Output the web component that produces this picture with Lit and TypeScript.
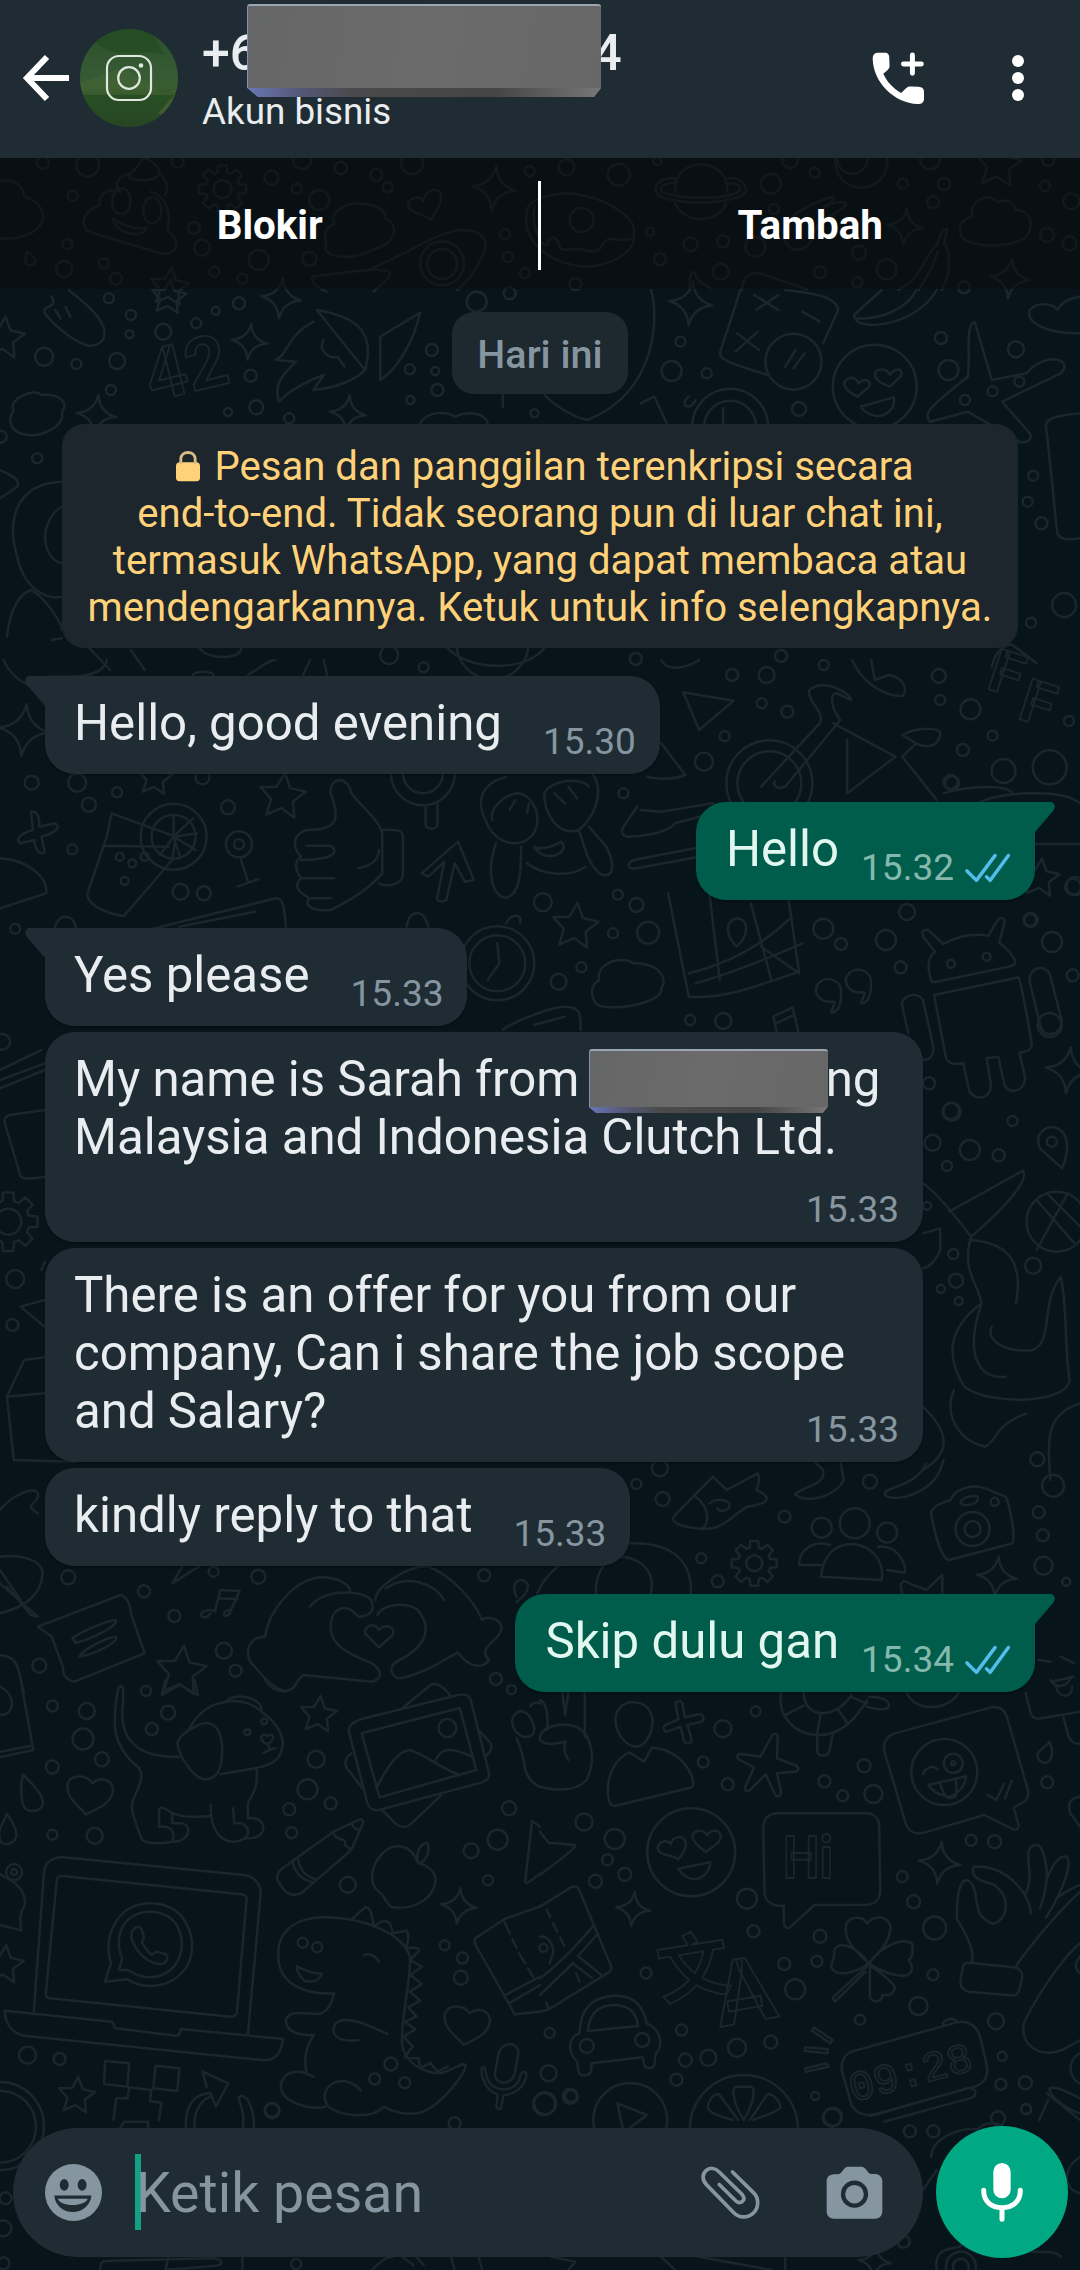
import { LitElement, html, svg, css, nothing } from "lit";
import { customElement, property } from "lit/decorators.js";
import { classMap } from "lit/directives/class-map.js";

type Triple = [number, number, number];

/* One patch of the wallpaper: an origin, a scale, and the doodles inside it. */
interface Patch {
  x: number;
  y: number;
  sx: number;
  dots: Triple[];
  stars?: Triple[];
  sparkles?: Triple[];
  gears?: Triple[];
  paths: string[];
}

const SY = 1 / 3;
const WIDE = 0.68878;

const patches: Patch[] = [
  {
    x: 0, y: 0, sx: 0.40816,
    dots: [[105,488,6],[215,495,11.5],[435,485,6],[665,533,7],[727,566,5],[835,504,6],[922,525,6],[950,562,5],[1010,490,11],[1298,513,5],[1388,502,8],[1516,524,11],[740,480,9],[178,587,5],[165,733,5],[157,808,8],[254,790,5],[284,836,6],[475,684,6],[495,743,8],[525,815,5],[594,836,5],[634,780,10],[758,776,7],[782,600,10],[1237,703,5],[1244,771,5],[1286,820,5],[1410,852,6],[545,567,9],[1083,790,22],[1083,792,15],[1425,660,12]],
    stars: [[415,862,20]],
    sparkles: [[1210,565,22]],
    gears: [[545,567,21]],
    paths: [
      "M0 545C20 535 55 545 60 590C95 600 110 640 105 660C90 710 30 720 0 715",
      "M320 520C340 500 350 470 355 474C370 480 392 500 390 520C385 550 300 545 320 520M315 522C285 530 280 560 295 575M390 520C405 535 415 560 405 585M295 575C260 560 240 590 245 615C200 630 190 690 230 700L400 762C440 762 440 710 410 695C420 640 410 590 370 575",
      "M277 655C300 680 340 690 360 682C350 720 280 700 277 655ZM298 565C325 565 330 640 296 642C265 640 270 565 298 565ZM374 592C400 592 405 668 372 670C342 668 345 592 374 592Z",
      "M905 808C1000 760 1080 690 1130 690C1190 690 1200 730 1180 770C1165 820 1140 850 1120 870M765 830C760 850 790 870 800 875M765 830C830 820 930 800 955 815C960 830 930 860 915 875",
      "M820 670C800 640 860 600 880 612C920 610 945 630 945 655C985 680 960 740 920 745C860 790 780 770 800 730C790 700 800 680 820 670Z",
      "M1055 660C1040 640 1000 640 1000 615C1003 590 1030 585 1037 605C1040 570 1070 560 1080 580C1085 610 1065 640 1055 660Z",
      "M1290 640C1290 590 1380 570 1420 585C1500 600 1560 660 1553 700C1560 760 1490 800 1430 800C1340 790 1280 720 1290 640ZM1310 620C1300 660 1320 740 1340 735C1345 700 1370 710 1372 745C1390 760 1410 735 1430 750C1445 755 1470 760 1475 735C1490 700 1520 730 1548 715",
      "M65 755C80 765 90 780 85 790C75 800 62 795 62 785Z",
    ],
  },
  {
    x: 640, y: 0, sx: 1 / 3,
    dots: [[393,551,10],[524,518,5],[450,480,8],[788,551,5],[870,478,10],[912,552,6],[879,607,6],[1215,558,5],[1294,604,8],[1225,480,6],[52,483,4],[402,627,5],[30,695,4],[152,733,7],[249,724,6],[60,778,6],[242,815,8],[346,740,10],[540,817,6],[657,758,7],[652,847,5],[740,808,10],[1221,705,7],[1289,730,7],[972,862,6],[664,485,26],[637,476,15]],
    stars: [[1075,495,24]],
    sparkles: [[795,680,18],[1110,835,20]],
    paths: [
      "M105 575C100 465 265 465 262 575M105 610C130 670 235 675 258 610M105 535C60 530 40 560 50 580C90 620 290 615 318 575C320 545 290 530 262 535M105 548C70 550 55 560 65 575C120 600 260 600 300 572C305 555 285 548 262 550",
      "M995 650C990 600 1040 575 1075 607C1110 590 1130 620 1125 630C1170 630 1185 670 1160 710C1120 745 990 745 965 710C950 680 970 655 995 650Z",
      "M430 690C440 640 540 600 580 590C590 600 560 615 545 625C580 605 620 600 618 615C600 640 540 650 520 700C510 765 430 770 430 690Z",
      "M890 735C850 770 850 830 775 870M890 735L908 690L922 688L912 730C935 760 930 830 905 870M893 755C880 800 850 850 835 870",
      "M305 870C310 830 330 815 360 820L500 868M150 870C145 830 155 805 165 820C170 850 200 855 210 865",
    ],
  },
  {
    x: 0, y: 290, sx: WIDE,
    dots: [[158,25,5],[190,75,5],[313,62,4],[347,40,6],[285,100,5],[237,125,8],[64,200,9],[111,222,5],[170,213,8],[188,133,4],[161,300,5],[364,257,6],[372,352,7],[331,366,4],[420,385,5],[692,35,10],[627,180,6],[595,238,5],[632,243,4],[635,300,6],[596,330,4],[988,155,5],[975,243,10],[1026,250,5],[1160,357,7],[1366,144,6],[1377,240,10],[1475,178,8],[740,10,6],[776,370,4],[1441,304,5],[1480,275,5],[1401,330,5],[1500,557,5],[1492,635,5],[1512,700,6],[1497,998,5],[54,505,5],[1,440,6],[923,1107,6],[1134,1098,6],[565,1095,9],[1545,945,12],[1152,215,28],[1270,290,42],[1060,410,38],[1060,410,26]],
    stars: [[245,22,18],[5,145,22]],
    sparkles: [[408,25,20],[362,155,18],[140,375,20],[505,370,18],[1003,40,22]],
    paths: [
      "M75 20C85 60 60 40 65 70C80 110 110 160 130 168C150 165 155 140 150 110C140 60 110 20 100 0M80 60L88 85M95 50L102 80",
      "M460 60L530 240C545 130 520 80 460 60M455 95C415 140 420 190 400 210L430 215C400 270 400 300 405 335C420 300 450 270 470 255L455 300C500 290 520 260 530 240M470 150C460 180 480 210 490 200L500 230",
      "M610 68L552 140V270C575 240 600 160 610 68Z",
      "M20 360C10 330 50 290 60 315C90 310 100 345 90 365C95 410 60 440 40 435C15 430 10 390 20 360Z",
      "M1075 0L1045 190C1045 210 1060 220 1115 255M1140 0C1190 10 1215 25 1217 60L1195 160M1095 15L1130 60M1130 15L1098 60M1165 65L1190 95M1070 130L1102 180M1100 125L1068 185M1140 230L1155 180M1152 235L1168 190",
      "M1245 320C1225 300 1220 275 1232 265C1240 260 1245 270 1246 280C1255 262 1265 270 1262 290ZM1292 290C1270 275 1265 250 1275 240C1285 235 1290 245 1292 255C1300 230 1312 235 1308 258ZM1250 350L1298 322C1300 360 1285 380 1272 378C1260 372 1252 365 1250 350Z",
      "M1440 270L1415 95C1400 110 1410 200 1405 260C1350 350 1340 370 1350 395L1405 365L1480 455C1490 460 1500 450 1495 430L1455 335L1540 250C1560 210 1520 180 1490 250Z",
      "M1280 0L1240 75C1240 130 1330 110 1360 0M1330 0C1320 50 1280 90 1245 85",
      "M1568 130C1510 130 1490 90 1495 60C1505 35 1530 40 1535 60C1540 40 1550 25 1568 20",
      "M90 575C20 580 10 700 25 800C35 900 70 930 90 920M90 650C60 680 55 800 90 820M0 540C20 560 30 570 25 590L0 625M10 1040C15 950 30 910 45 900C65 920 90 1000 90 1020M75 1050L90 1045",
      "M1568 370C1520 380 1515 390 1520 430L1535 730C1540 750 1550 750 1568 745",
      "M650 1075C680 1140 760 1150 790 1075M130 1075L160 1140M190 1080L210 1140M290 1075C300 1110 350 1110 350 1075M1440 1130C1445 1080 1460 1060 1470 1065L1505 1120",
      "M945 0C955 60 960 300 853 390C830 380 800 340 790 312M610 400C620 360 650 365 660 380C680 360 705 370 708 400M730 312V350M930 340L950 320L968 400M1000 320C985 340 1000 370 1010 330M1050 355V400",
    ],
  },
  {
    x: 0, y: 660, sx: WIDE,
    dots: [[46,368,7],[112,368,9],[170,397,5],[129,434,7],[294,352,7],[331,442,7],[105,568,5],[615,22,5],[1063,45,6],[1113,45,8],[1196,15,5],[1106,130,5],[1143,155,6],[1052,229,5],[1022,305,9],[905,400,5],[1363,48,7],[1365,120,5],[1409,148,10],[1441,227,5],[1398,270,6],[1380,366,7],[1457,333,12],[1524,322,17],[1552,183,5],[262,695,8],[296,700,7],[788,727,9],[897,704,5],[924,735,7],[890,820,5],[941,818,11],[811,965,8],[844,922,5],[22,806,5],[1050,1083,8],[1002,1080,5],[347,553,13],[347,553,5],[174,590,4],[192,610,4],[210,590,4],[181,662,4],[252,530,33],[252,530,22],[614,340,32],[614,340,20],[722,910,37],[722,910,28],[1117,370,43],[1117,370,32],[1496,780,6],[1558,680,8],[715,-50,36]],
    stars: [[225,355,18],[410,410,24],[835,800,24],[1510,655,20]],
    sparkles: [[35,210,26]],
    paths: [
      "M162 460L255 530L250 600L180 768C150 760 125 730 127 700L155 530ZM150 557L245 560M252 465V530L280 475M252 530L286 520M252 530L284 570M252 530L262 594M252 530L232 585",
      "M480 400C478 350 505 345 510 400C530 450 550 480 555 520V640C530 700 490 740 480 750C450 755 440 730 450 715C425 690 430 670 437 655C425 620 430 600 437 590C420 550 430 520 445 510C490 510 495 480 480 400ZM445 557H480C495 580 480 600 437 600M437 655H485M450 715H480M555 510C590 505 585 520 585 560V640C585 680 560 680 550 670M520 625C545 615 550 590 550 570",
      "M350 600L360 665M345 680L375 657M618 435V495C620 510 635 510 635 495V430",
      "M612 640L665 545L688 660L675 665L660 610L648 720C640 730 632 720 635 710L645 605L622 650Z",
      "M735 350C700 370 690 420 705 480C715 540 740 560 760 545C790 520 785 420 755 400C730 400 710 450 715 480M860 340C880 400 860 480 840 510C810 530 790 460 790 400C800 360 840 350 855 380M720 550C705 640 715 710 735 713C760 700 755 600 757 560M840 510C850 560 850 600 870 640C890 660 895 620 880 560L855 500M775 560C790 575 810 550 815 545C825 570 810 590 795 588C785 585 778 570 775 560ZM765 610C790 650 830 650 850 620M740 450L748 420M765 460L768 430M805 400L820 430M825 380L838 415",
      "M925 440C905 500 895 520 910 530C930 530 970 520 980 490L1035 460M930 450L960 455L1035 430M925 625C910 630 910 610 920 600L1020 560M925 625L1015 590",
      "M45 455C55 450 58 480 57 500L80 490C90 500 80 520 60 530L65 575C60 590 50 570 50 540L30 550C20 540 30 520 48 510Z",
      "M1105 380L1190 190C1200 160 1170 120 1175 90C1200 50 1240 110 1235 120L1215 100C1205 100 1205 140 1220 180L1140 380C1130 390 1120 375 1125 365M1210 190L1300 290L1230 400V240M1310 225C1330 200 1370 200 1365 225C1360 270 1340 260 1330 250L1310 225M1330 250L1310 290L1360 420",
      "M992 97L1065 122L1015 210ZM960 250L995 345C980 360 950 358 940 350",
      "M1237 0C1250 60 1280 110 1310 108C1320 90 1310 50 1290 45L1270 60L1265 0",
      "M970 700L1000 1010C1050 1020 1110 970 1160 935L1145 720M1000 940C1060 910 1110 850 1150 770M1010 970C1060 940 1110 900 1165 850M1105 860L1160 940M1070 860C1050 820 1055 780 1070 775C1090 780 1085 830 1070 860ZM1030 700L1045 960M1090 730L1120 960",
      "M870 960C865 910 900 885 920 910C960 910 970 960 960 985C965 1030 880 1060 865 1030C855 1000 860 970 870 960Z",
      "M215 810L400 715C410 715 412 725 415 800M260 800L370 755M0 595C40 600 70 650 67 700L0 745M80 800C85 760 105 760 110 800M590 800C595 745 615 745 622 800M722 850L725 910L708 960M735 790C740 760 760 760 755 790",
      "M730 1110C740 1090 800 1040 820 1040C845 1040 843 1070 843 1110M775 1095L820 1070M5 0C20 70 60 100 70 80M155 0C150 60 90 50 70 50M360 45C380 20 390 0 400 0M440 45L450 0M470 0L475 45M280 45C285 30 310 35 310 45M960 0C970 40 1000 20 1015 0",
      "M1370 400C1400 380 1460 370 1470 400M1420 430C1440 400 1540 380 1568 430",
    ],
  },
  {
    x: 760, y: 770, sx: 1 / 3,
    dots: [[576,39,7],[441,426,8],[812,450,7],[876,516,10],[190,476,10],[243,522,6],[378,510,10],[422,592,6],[938,616,6],[573,581,4],[680,560,4],[507,940,6],[575,1025,9],[946,348,9]],
    sparkles: [[925,900,23]],
    paths: [
      "M514 632C500 590 505 560 525 545L490 500C480 480 500 475 510 485L550 522C600 495 640 490 685 497L710 455C725 435 740 445 730 470L718 518C740 535 760 555 766 575C766 585 755 588 745 590L530 635C520 638 516 636 514 632Z",
      "M522 675L775 622C785 640 810 790 815 820C815 840 800 845 778 848L795 920C797 970 740 975 732 940L715 860L680 865L692 940C698 990 640 995 627 960L610 880C580 885 565 880 558 865Z",
      "M810 640C800 590 860 580 870 615L905 750C908 795 855 805 843 775ZM425 700C435 670 480 665 490 695L520 830C523 860 505 870 490 870M425 700L445 790",
      "M215 728C210 715 230 705 222 695C175 700 160 665 172 645C190 615 240 625 243 660C245 700 235 725 215 728ZM305 700C300 687 320 677 312 667C265 672 250 637 262 617C280 587 330 597 333 632C335 672 325 697 305 700Z",
      "M50 786L40 740L98 712L115 786M48 760L102 735M828 222H960",
    ],
  },
  {
    x: 0, y: 1020, sx: WIDE,
    dots: [[1381,273,8],[1470,303,5],[1354,368,8],[1408,390,10],[1450,406,6],[1375,438,5],[1527,365,5],[1500,737,8],[1384,702,5],[1388,782,7],[1366,806,4],[1392,843,4],[1506,1318,7],[1524,15,12],[18,915,6],[22,777,9],[3,65,8],[1534,605,30],[1346,557,4],[12,605,13]],
    gears: [[12,605,26]],
    paths: [
      "M1542 445L1510 385C1500 340 1520 318 1530 322C1550 330 1555 380 1542 445Z",
      "M1340 490C1360 520 1380 570 1410 650M1378 575L1485 452C1495 480 1460 560 1410 650C1395 750 1420 790 1425 850C1380 920 1370 1000 1400 1100C1440 1160 1550 1150 1553 1080C1545 980 1550 860 1540 770M1410 660C1470 670 1485 740 1475 850M1440 920C1430 960 1460 1000 1500 990C1530 960 1510 850 1540 770M1425 850C1400 1000 1420 1080 1460 1070M1385 1110C1370 1180 1390 1260 1430 1280C1450 1260 1440 1220 1490 1180M1340 1160C1380 1240 1380 1300 1340 1350M1340 640L1365 625V690C1360 720 1350 740 1340 745",
      "M1505 540L1560 670M1520 520L1568 620M1550 520L1505 690",
      "M65 270L15 285C5 290 5 300 10 330L30 470C35 480 50 475 65 470M0 150L60 90M0 180L65 130M0 205L65 150M65 725L60 750M30 860L65 840M30 860L65 920M70 1010L35 1020L10 1130L65 1120M10 1130L20 1320L110 1325M1525 1380C1520 1250 1520 1180 1568 1150",
    ],
  },
  {
    x: 0, y: 1460, sx: WIDE,
    dots: [[99,352,7],[209,394,6],[310,335,5],[375,350,7],[253,468,6],[325,572,8],[342,632,6],[57,617,7],[703,346,6],[720,657,6],[924,72,5],[962,117,7],[958,25,8],[1139,170,6],[1263,65,7],[1018,295,5],[1042,364,6],[1529,77,11],[1508,157,6],[1514,226,6],[1515,317,9],[1548,365,4],[1412,207,17],[1412,207,8],[1193,203,10],[1241,190,15],[1288,218,10],[1095,310,8],[1444,125,4]],
    gears: [[1095,310,20]],
    stars: [[263,635,26]],
    sparkles: [[1447,350,20]],
    paths: [
      "M305 460C300 480 290 470 292 460C300 445 310 450 312 455L320 390L348 393L332 465C320 475 325 450 333 450M318 415L345 418",
      "M55 500L175 405C185 410 190 440 190 460L210 580L108 665C95 660 90 640 92 625L75 530ZM105 535C120 510 160 480 168 480C175 495 130 540 110 548ZM115 590C125 560 160 530 168 530C175 545 135 585 115 590Z",
      "M385 530C390 450 430 350 470 352C500 355 510 385 508 400M450 440C470 380 540 390 540 430C545 460 530 470 520 470C500 420 480 450 480 500C480 570 520 590 540 610C560 640 550 660 540 665L440 645C430 660 430 690 415 693C390 680 380 640 365 610C355 580 360 530 385 530M545 420C545 380 590 320 620 318C660 350 690 430 700 480M548 465C555 430 600 420 610 460C630 520 610 570 580 600C560 620 570 655 580 655C620 640 650 590 665 578C680 620 700 630 710 600C690 560 730 540 728 500C725 470 700 470 700 480M560 385C590 340 630 370 645 420M550 562L530 520C530 490 545 490 550 510C560 490 575 500 570 525Z",
      "M1035 50L1055 90L1100 40C1105 60 1100 80 1098 90C1120 110 1120 130 1085 140C1060 170 1050 210 1020 207C990 200 970 190 980 165ZM1030 130C1040 110 1065 120 1058 145C1050 160 1040 150 1042 145M1010 110C1030 140 1030 190 1020 205",
      "M1192 350C1195 280 1215 250 1240 252C1265 260 1285 300 1280 360ZM1195 315L1160 315C1160 270 1180 240 1205 255M1275 260C1300 255 1315 300 1314 338L1288 330",
      "M1352 165C1350 140 1370 125 1380 120C1385 90 1410 70 1430 85L1460 110C1465 130 1475 220 1470 250L1378 300C1370 300 1360 250 1352 165ZM1395 130C1395 110 1420 100 1420 115C1420 135 1400 140 1395 130Z",
      "M780 400C800 300 860 250 920 250C980 250 1005 310 1003 400M865 400C865 330 880 290 905 290C940 300 950 350 945 400M750 410C740 370 755 345 765 370C770 390 760 410 750 425M250 370L265 318M250 370L290 318",
      "M0 290C20 285 60 290 62 340C60 400 40 440 0 460M0 370L55 470L45 465L10 380M0 330L30 420M1310 400C1305 370 1310 355 1320 370L1345 390L1368 345V400M0 585C20 590 25 610 28 640L35 700M0 150C20 100 50 80 55 100C60 130 30 130 55 160M1155 100C1160 130 1210 120 1225 60L1220 0M1285 105C1300 130 1350 100 1365 30L1370 0M1155 105C1160 80 1200 80 1195 30L1180 0M1285 100C1285 80 1330 80 1345 10",
      "M1508 600L1525 605M1540 590L1560 610M1525 660C1535 690 1550 680 1555 650",
    ],
  },
  {
    x: 0, y: 1680, sx: 0.34439,
    dots: [[152,78,5.5],[252,93,8],[424,33,5],[488,98,7],[441,147,6],[241,177,10.5],[296,238,7],[152,261,6.5],[718,157,3],[767,124,3],[918,238,8.5],[893,328,10],[840,388,6],[960,370,6],[847,458,5.5],[152,464,5],[275,467,8],[1299,144,9],[1010,614,8],[1368,512,7.5],[1445,479,10],[1478,385,7],[1417,601,5],[1291,796,5],[1343,834,5.5],[1338,893,7],[80,1125,8.5],[173,1137,6],[790,1292,7.5],[1135,1152,6.5],[1088,1197,5.5],[1175,1208,5.5],[879,788,5],[921,802,5],[1485,29,4.5],[41,576,8],[41,576,3],[0,1338,44],[0,1340,36]],
    stars: [[925,105,19],[222,1248,19],[12,855,20]],
    sparkles: [[1332,678,18]],
    paths: [
      "M550 145C580 90 620 70 655 66C700 55 740 75 765 100C810 130 825 180 820 200C815 240 790 255 740 265L640 283M655 66C680 35 760 50 760 92M515 190C525 160 550 150 580 133C640 110 650 190 643 240C640 290 610 300 590 298C560 290 520 230 515 190ZM520 230C400 235 340 180 358 60C360 10 350 10 342 30C330 110 315 190 400 260C425 290 400 320 385 365C375 390 400 440 410 475C420 495 480 490 500 485C550 485 560 440 530 430H500V400C480 385 465 375 462 390V440C500 435 510 460 500 485M500 400C540 415 580 410 612 408M612 375C610 450 640 485 680 485C730 480 730 440 700 430H680L677 385M745 265C750 340 725 350 720 370V415C755 410 765 430 765 445C760 475 730 475 715 475",
      "M757 170C765 160 770 165 778 168C785 160 795 165 792 175C785 195 765 200 757 170ZM778 192L782 205M765 218C780 215 785 205 800 205",
      "M250 403C220 370 190 350 197 310C205 285 250 280 268 310C290 290 325 295 328 330C325 370 285 385 250 403ZM1347 1095C1315 1060 1285 1040 1292 1002C1300 975 1345 970 1363 1000C1385 982 1420 988 1423 1022C1420 1062 1380 1077 1347 1095Z",
      "M67 283C90 310 125 340 125 370C120 400 75 400 67 375C60 350 60 310 67 283ZM20 402C40 430 50 450 47 470C40 495 5 500 0 480C-10 450 10 430 20 402Z",
      "M1050 117L1330 45C1350 40 1360 45 1367 60L1420 280C1420 295 1415 300 1400 307L1100 390C1085 392 1072 385 1067 370L1013 155C1012 135 1025 125 1050 117ZM1050 160L1335 84L1383 270L1102 352ZM1095 320C1130 250 1160 210 1190 211C1230 220 1270 260 1335 285M1262 247C1275 210 1300 195 1370 230M1168 85L1250 15C1265 8 1280 10 1308 48M1390 150L1425 190C1430 210 1420 220 1408 232M1020 220C1000 235 1000 255 1008 265L1052 325M1112 392L1150 432C1165 443 1175 443 1190 435L1280 347",
      "M968 455L1045 418C1055 418 1057 425 1052 435L1020 510L880 635C860 650 840 645 825 630L805 600C803 585 808 575 820 565L968 455C970 480 990 470 985 478C1000 475 1005 485 1002 495L1020 510M1022 430C1025 445 1035 450 1045 447M850 543C855 580 880 600 905 605M865 535C870 570 890 590 915 597",
      "M1215 550C1240 555 1265 575 1265 600C1262 650 1210 690 1140 682C1120 675 1115 640 1100 635C1070 610 1075 560 1110 520C1140 490 1190 485 1215 550C1205 520 1220 490 1240 488C1250 510 1240 540 1218 550",
      "M98 997L128 575C130 545 155 530 185 532L710 585C740 590 757 615 757 640L720 1060M165 600C167 590 172 587 182 588L700 643C712 645 718 650 716 660L688 995C686 1005 682 1010 670 1010L145 955C135 953 132 948 133 940ZM13 992L325 1025L335 1045L510 1067C520 1067 522 1062 525 1047L822 1077C815 1120 800 1140 770 1141L70 1067C35 1060 15 1030 13 992Z",
      "M305 905L322 850C305 790 320 730 365 692C420 655 500 665 535 720C575 785 560 860 510 895C470 925 410 925 370 898ZM345 870L355 835C335 790 345 740 380 712C420 685 480 690 510 730C540 780 530 840 495 870C460 900 410 898 372 870ZM395 742C380 750 378 770 385 785C400 820 430 850 465 852C485 850 492 830 480 822L455 815L440 825C425 810 415 795 412 785L418 770L410 745C405 740 400 740 395 742Z",
      "M970 940C880 945 810 910 808 830C805 750 860 710 950 712C1060 715 1170 760 1190 830C1195 900 1165 1000 1167 1090C1175 1150 1230 1180 1280 1180C1320 1170 1340 1145 1352 1155C1355 1180 1270 1290 1210 1300C1170 1305 1140 1295 1115 1280C1080 1320 980 1310 950 1275C930 1240 955 1200 1000 1203C1030 1210 1040 1220 1047 1232M970 940C960 985 940 1002 920 1002C880 1000 840 990 830 1020C830 1060 870 1065 912 1065C880 1110 885 1150 890 1180M910 1190C870 1165 820 1170 815 1220C820 1270 900 1290 945 1280M862 858C880 870 910 880 935 882C920 910 900 905 885 903C870 890 862 875 862 858ZM1057 825C1070 820 1090 825 1100 845M1125 1062C1060 1030 1000 1005 975 1030C955 1060 980 1090 1042 1080",
      "M1022 717L1060 682C1075 680 1080 700 1085 740M1088 738C1110 720 1135 710 1140 760L1180 752C1190 760 1185 790 1178 805C1210 800 1220 805 1215 815L1190 840L1225 860L1192 885L1225 912L1190 935L1220 962L1185 982L1210 1010L1175 1025L1205 1048L1172 1070L1198 1100L1175 1130M1190 1135L1215 1135L1220 1165L1250 1148L1270 1175L1300 1160",
      "M1447 1125C1452 1085 1505 1080 1505 1120L1495 1180C1485 1220 1435 1215 1437 1180ZM1398 1165C1410 1150 1410 1180 1415 1195C1430 1240 1500 1240 1510 1190C1515 1170 1530 1170 1528 1190C1520 1225 1490 1245 1462 1245L1455 1285C1447 1290 1440 1285 1442 1275L1445 1243C1415 1235 1398 1200 1398 1165Z",
      "M305 1143L375 1150L370 1220L302 1212ZM452 1157L521 1165L515 1233L445 1225ZM330 1320L337 1255H370L375 1222L440 1230L435 1263L468 1268L462 1320",
      "M540 1344C535 1270 570 1240 612 1240L627 1280L663 1210L588 1175L600 1220M565 1344C560 1290 590 1255 610 1252M705 1344C715 1290 690 1270 695 1250C710 1235 740 1280 737 1344",
      "M0 583L30 600C60 620 80 650 70 680C55 700 60 740 62 752L0 735M60 0L97 210L0 232M0 215L92 197M0 20C20 30 35 50 35 75C30 100 15 105 0 105M480 0L470 45L522 15L575 45L565 0M770 0C790 40 850 50 865 0",
      "M1568 680L1465 717L1380 775C1375 785 1378 790 1382 797L1495 1003L1568 995M1468 945L1568 890M1478 970L1568 915M1465 725L1480 760M1488 778L1500 803M1507 820L1525 850M1533 865L1548 890M1568 440L1545 422L1525 605C1525 612 1532 612 1568 580",
      "M1490 140C1480 110 1500 90 1520 95C1545 105 1560 150 1545 165C1525 180 1500 165 1490 140ZM1500 175C1520 220 1520 240 1525 270C1535 300 1550 310 1568 322M1540 80C1550 60 1568 70 1568 70",
    ],
  },
  {
    x: 540, y: 1680, sx: 0.34439,
    dots: [[626,94,5],[531,146,8.5],[474,246,5.5],[545,313,6],[826,304,6],[941,257,6.5],[879,347,5.5],[968,342,9],[128,426,8.5],[217,477,10],[196,539,5.5],[246,583,6.5],[161,604,6.5],[439,517,44],[601,656,10],[620,754,6],[813,769,6.5],[709,852,6],[804,844,5.5],[741,928,10],[308,879,5.5],[411,1050,5.5],[28,1059,5],[422,1140,6.5],[489,1133,8],[572,1103,9],[670,1086,6.5],[396,1199,6],[25,1180,8],[88,1249,7.5],[15,1270,11],[799,1248,4],[850,1310,9],[1252,481,5.5],[1320,485,6.5],[1473,307,6],[1052,590,5.5],[1085,665,6.5],[1146,744,11.5],[1141,884,5.5],[1099,978,9],[929,1019,5],[1324,1024,8],[1342,1129,4.5],[1338,1213,5.5],[1409,1208,6.5],[1411,1286,5],[1330,1315,7],[1174,276,33],[1200,250,9.5],[1200,250,2],[136,1098,7],[297,1080,7],[262,1320,37],[592,1347,54],[1590,1165,17],[10,803,4]],
    sparkles: [[270,687,17],[1160,548,21]],
    paths: [
      "M402 538C380 520 340 530 342 500C350 480 370 480 380 492C385 470 410 465 420 480C430 500 415 520 402 538ZM482 516C460 500 440 480 443 465C455 445 475 450 485 465C500 445 520 450 525 468C525 490 500 500 482 516ZM402 566L495 547C490 580 470 598 445 598C425 595 410 580 402 566Z",
      "M690 400H945C970 400 985 415 985 440L988 635C985 660 975 672 950 674L797 675L728 740C718 748 710 742 708 730V677H690C665 672 650 655 652 630L648 445C650 415 665 400 690 400Z",
      "M220 130C215 90 240 65 272 67C310 67 330 100 326 130C325 170 300 200 280 200C255 200 225 170 220 130ZM197 340C195 280 220 235 260 217L302 245L325 203C390 205 440 260 445 310C445 320 440 322 430 325L220 377C205 378 200 370 197 340Z",
      "M393 70C398 60 412 62 414 72L420 112L462 103C475 102 480 118 468 125L428 135L440 178C440 192 425 195 418 182L408 140L370 155C358 155 355 140 365 135L402 118Z",
      "M675 165C685 155 692 165 690 180L688 235L740 255C755 262 752 275 738 275L688 280L700 335C700 350 688 355 682 342L655 283L610 330C600 338 592 330 597 318L622 262L580 240C565 230 575 218 590 223L640 230Z",
      "M700 40C690 110 740 165 810 165C880 165 920 110 950 60M765 40C770 90 800 100 825 100C860 95 890 70 905 45M710 107L765 77M815 100L805 160M865 88L895 133M905 52L950 70M805 163V215C808 230 835 230 840 215L850 163M955 50C1000 50 1015 65 1013 80C1005 92 970 88 948 80",
      "M1030 160L1310 82C1335 78 1350 90 1357 115L1418 335C1420 355 1410 368 1375 382L1390 435C1390 450 1380 452 1370 446L1290 405L1115 458C1090 465 1070 455 1062 430L1000 215C995 190 1005 170 1030 160ZM1112 282C1120 260 1145 255 1155 270M1128 315L1237 289C1235 320 1210 345 1185 350C1160 345 1140 335 1128 315ZM1300 345L1325 360L1347 312M1350 355L1370 302M1160 308L1175 345C1190 365 1210 350 1210 340L1208 297",
      "M1480 186C1490 210 1490 240 1470 248C1450 250 1440 230 1447 218C1455 205 1470 200 1480 186ZM1065 40C1090 95 1180 95 1215 40M1410 40L1425 100C1430 115 1440 118 1455 115L1568 95M1520 112L1535 170C1545 190 1555 192 1568 190M1485 5L1550 -10M1497 15C1505 60 1545 55 1545 20M1568 350C1540 355 1530 370 1540 400L1568 440",
      "M955 850C900 800 880 770 890 730C905 705 940 710 950 730C970 705 1010 705 1018 740C1015 790 985 815 955 850ZM955 850C920 800 870 780 855 810C855 835 850 840 845 860C855 890 910 885 955 850ZM955 850C990 800 1050 770 1080 790C1085 820 1080 835 1070 840C1085 860 1085 880 1060 887C1020 890 985 870 955 850ZM958 855V950C965 970 990 970 995 945C1020 950 1030 935 1030 920C1010 890 980 875 958 855ZM950 858C920 890 870 930 850 955L857 965L945 875",
      "M1260 560C1330 555 1380 600 1405 640C1420 670 1425 680 1425 700M1260 560C1250 580 1260 600 1315 612C1370 650 1360 720 1315 732C1270 710 1275 690 1268 670C1265 630 1255 600 1235 600C1215 610 1210 660 1210 715C1235 760 1260 800 1255 845M1410 640C1435 590 1410 540 1420 510C1430 490 1450 490 1458 510C1475 560 1480 600 1452 685M1475 590C1490 550 1510 525 1530 530C1545 550 1525 620 1470 712M1500 655C1520 640 1540 625 1568 615M1568 635C1500 700 1420 800 1380 862M1245 848L1375 862C1395 862 1402 880 1400 895L1392 930C1388 945 1380 947 1365 946L1245 935C1225 930 1218 915 1222 895L1228 860C1230 850 1238 848 1245 848Z",
      "M1568 790C1510 840 1430 970 1405 1030C1395 1080 1430 1120 1480 1118C1520 1115 1540 1095 1568 1080M1568 830C1550 850 1555 870 1568 880",
      "M115 1060C115 990 150 950 215 947C280 945 300 985 310 1030C345 1045 355 1080 345 1110C330 1120 335 1140 332 1155C325 1170 305 1165 303 1155L298 1132L150 1150L148 1175C140 1190 115 1190 112 1175L108 1145C80 1120 80 1070 115 1060ZM138 1053C145 990 180 975 215 975C260 975 280 1000 285 1038Z",
      "M905 1115L1210 1027C1245 1020 1270 1040 1278 1070L1298 1160C1302 1190 1290 1210 1262 1220L970 1303C935 1310 910 1295 902 1265L877 1175C872 1145 885 1122 905 1115ZM960 1308L1230 1228C1262 1215 1275 1240 1255 1253L1000 1325M1170 1032C1170 1018 1205 1010 1210 1025",
      "M795 1042L850 1080L842 1090L790 1052ZM770 1102L835 1108V1120L768 1113ZM770 1165L832 1150L838 1160L772 1175Z",
      "M592 1320C560 1270 555 1225 570 1220H612C625 1225 625 1260 592 1320M575 1320L520 1243C500 1240 485 1270 488 1285C500 1305 530 1310 560 1320M610 1320L660 1243C680 1240 700 1270 697 1285C680 1300 640 1310 620 1320M240 1344L225 1270L310 1305L260 1344",
      "M0 680L90 622C105 615 112 622 116 635L207 860C208 870 205 875 195 880L30 985C20 992 10 992 0 994M0 895C60 850 110 790 158 735M0 945L95 850L150 893M110 828L165 765M110 828L178 885M20 690L30 712M38 730L50 755M58 772L70 798M0 770C20 765 40 790 38 820L28 850M105 880L115 905M18 968L25 985",
      "M1480 1225C1500 1215 1568 1255 1568 1255M1480 1225C1475 1245 1530 1290 1568 1300M1475 1260L1450 1320M0 455L25 488L100 495C105 500 103 505 0 585",
      "M130 40V170M65 40L73 105L82 40M0 60C20 70 25 110 20 150M0 180C-5 140 60 125 105 140C150 160 165 240 135 300C110 330 60 335 0 320M0 180C20 200 50 190 75 185C65 210 75 225 82 240",
    ],
  },
  {
    x: 0, y: 2090, sx: WIDE,
    dots: [[395,60,7],[790,42,11],[829,18,6],[1208,83,9],[1321,124,6],[1355,124,6],[1490,58,5],[8,325,6],[430,522,5],[1312,455,6],[1395,530,15],[1395,530,8],[5,415,8],[5,520,6],[660,100,6]],
    sparkles: [[1270,515,16]],
    paths: [
      "M145 540C145 515 150 512 160 512L310 505C325 508 325 525 310 528L240 540M352 540V500M540 540C550 520 560 500 570 500M585 502L600 525M605 502L615 525M660 540L655 500M700 540L695 500M800 500L835 515L825 540M960 500L980 540M1015 500L1120 540M1140 540V505",
      "M1360 540C1355 470 1380 480 1395 468C1400 450 1440 450 1450 470C1480 500 1530 470 1540 500M1352 200C1352 150 1390 110 1420 118C1430 90 1450 100 1455 108M1340 300L1360 240M1520 10L1568 90M1568 200C1540 240 1545 300 1568 310",
      "M175 113L180 95H215V113M240 540L245 500",
    ],
  },
];

const polar = (cx: number, cy: number, r: number, deg: number) => {
  const a = (deg * Math.PI) / 180;
  return `${(cx + r * Math.cos(a)).toFixed(1)} ${(cy + r * Math.sin(a)).toFixed(1)}`;
};

function starPath(cx: number, cy: number, r: number): string {
  const pts: string[] = [];
  for (let i = 0; i < 10; i++) pts.push(polar(cx, cy, i % 2 ? r * 0.48 : r, -84 + i * 36));
  return `M${pts.join("L")}Z`;
}

function sparklePath(cx: number, cy: number, r: number): string {
  let d = `M${polar(cx, cy, r, -84)}`;
  for (let i = 0; i < 4; i++) d += `Q${polar(cx, cy, r * 0.2, -39 + i * 90)} ${polar(cx, cy, r, 6 + i * 90)}`;
  return d + "Z";
}

function gearPath(cx: number, cy: number, r: number): string {
  const pts: string[] = [];
  for (let i = 0; i < 8; i++) {
    const a = i * 45;
    pts.push(polar(cx, cy, r * 0.82, a - 16), polar(cx, cy, r * 1.14, a - 10), polar(cx, cy, r * 1.14, a + 10), polar(cx, cy, r * 0.82, a + 16));
  }
  return `M${pts.join("L")}Z`;
}

@customElement("chat-wallpaper")
class ChatWallpaper extends LitElement {
  static styles = css`
    :host { position: absolute; inset: 0; display: block; background: #07141a; }
    .art { display: block; width: 1080px; height: 2270px; fill: none; stroke: #19262c; stroke-width: 2.5; stroke-linejoin: round; stroke-linecap: round; }
    .line { vector-effect: non-scaling-stroke; }
    .word { font-family: Roboto, "Noto Sans CJK SC", sans-serif; font-weight: 700; stroke-width: 2; }
    .mono { font-family: "Liberation Mono", monospace; font-size: 42px; font-weight: 400; stroke-width: 1.8; }
    .s60 { font-size: 60px; }
    .s72 { font-size: 72px; }
    .s90 { font-size: 90px; }
  `;
  render() {
    return html`<svg class="art" viewBox="0 0 1080 2270" aria-hidden="true">
      ${patches.map((p) => {
        const place = (fn: (x: number, y: number, r: number) => string, list: Triple[] = []) =>
          list.map(([x, y, r]) => svg`<path d=${fn(p.x + x * p.sx, p.y + y * SY, r)} />`);
        return svg`<g>
          ${p.dots.map(([x, y, r]) => svg`<circle cx=${p.x + x * p.sx} cy=${p.y + y * SY} r=${r} />`)}
          ${place(starPath, p.stars)}${place(sparklePath, p.sparkles)}${place(gearPath, p.gears)}
          <g transform="translate(${p.x} ${p.y}) scale(${p.sx} ${SY})">
            ${p.paths.map((d) => svg`<path class="line" d=${d} />`)}
          </g>
        </g>`;
      })}
      <text class="word s72" transform="translate(152 402) rotate(-14)">42</text>
      <text class="word s60" transform="translate(783 1878) scale(.86 1)">Hi</text>
      <text class="word s72" transform="translate(662 1999) rotate(-9)">文</text>
      <text class="word s90" transform="translate(720 2027) rotate(-10)">A</text>
      <text class="word mono" transform="translate(853 2102) rotate(-15)">09:28</text>
      <text class="word s60" transform="translate(985 688) rotate(18)">F</text>
      <text class="word s60" transform="translate(1016 718) rotate(18)">F</text>
    </svg>`;
  }
}

@customElement("cover-block")
class CoverBlock extends LitElement {
  static styles = css`
    :host { display: inline-flex; flex-direction: column; position: relative; z-index: 1; }
    .face { flex: 1; box-sizing: border-box; border-top: 2px solid #9ba6b0; border-left: 1px solid #8590b0; border-radius: 3px 3px 0 0; background: linear-gradient(100deg, #656667, #6c6b6b 50%, #676768); }
    .lip { height: var(--lip, 9px); background: linear-gradient(90deg, #6b78b8, #56597a 14%, #4a4a4c 30%, #454545 70%, #777); clip-path: polygon(0 0, 100% 0, 98% 100%, 3% 100%); }
  `;
  render() {
    return html`<div class="face"></div><div class="lip"></div>`;
  }
}

@customElement("chat-bubble")
class ChatBubble extends LitElement {
  @property({ type: Boolean }) out = false;
  @property({ type: Boolean }) tail = false;
  @property({ type: Boolean }) block = false;
  @property() time = "";

  static styles = css`
    :host { display: flex; }
    .bubble { position: relative; box-sizing: border-box; display: flex; min-height: 98px; padding: 18px 24px 11px 29px; border-radius: 30px; background: #1f2c34; color: #e9edef; box-shadow: 0 2px 2px rgba(0, 0, 0, 0.25); font-size: 49.2px; line-height: 58px; }
    .out { margin-left: auto; padding-left: 30px; background: #005d4b; color: #e2f7ef; }
    .tailed { border-top-left-radius: 0; }
    .out.tailed { border-top-left-radius: 30px; border-top-right-radius: 0; }
    .block { display: grid; width: 878px; }
    .block .meta { grid-area: 1 / 1; }
    .block .text { grid-area: 1 / 1; padding-bottom: 11px; }
    .meta { display: flex; align-items: center; align-self: flex-end; justify-self: end; margin-left: 41px; color: #8696a0; font-size: 37px; line-height: 43px; }
    .out .meta { margin-left: 22px; color: #86b9ac; }
    .ticks { width: 45px; height: 30px; margin-left: 11px; margin-right: 1px; margin-top: 1px; fill: none; stroke: #53bdeb; stroke-width: 10.5; stroke-linecap: round; stroke-linejoin: round; }
    .tail { position: absolute; top: 0; left: -20px; width: 21px; height: 32px; fill: #1f2c34; }
    .out .tail { left: auto; right: -20px; fill: #005d4b; }
  `;
  render() {
    return html`<div class=${classMap({ bubble: true, out: this.out, tailed: this.tail, block: this.block })}>
      ${this.tail
        ? html`<svg class="tail" viewBox="0 0 21 32"><path d=${this.out ? "M0 0H16C21 0 22 5 19 9L1 30V32H0Z" : "M21 0H5C0 0 -1 5 2 9L20 30V32H21Z"} /></svg>`
        : nothing}
      <div class="text"><slot></slot></div>
      <div class="meta">
        <span>${this.time}</span>
        ${this.out
          ? html`<svg class="ticks" viewBox="613 240 138 90"><path d="M619 294L648 323L705 247M679 312L690 323L746 247" /></svg>`
          : nothing}
      </div>
    </div>`;
  }
}

@customElement("app-root")
class AppRoot extends LitElement {
  static styles = css`
    :host { display: block; }
    .screen { position: relative; display: flex; flex-direction: column; width: 1080px; height: 2270px; overflow: hidden; font-family: Roboto, "Liberation Sans", sans-serif; background: #07141a; }
    .top, .actions, .feed, .composer { position: relative; }
    .top { box-sizing: border-box; display: flex; align-items: center; height: 158px; padding: 0 56px 2px 22px; background: #1f2c34; }
    .back { width: 48px; height: 48px; fill: none; stroke: #fff; stroke-width: 6; }
    .avatar { width: 98px; height: 98px; margin-left: 10px; }
    .who { flex: 1; align-self: flex-start; margin: 24px 0 0 24px; color: #e9edef; }
    .number { display: flex; height: 58px; font-size: 50px; font-weight: 500; line-height: 58px; }
    .number-cover { width: 354px; height: 93px; margin: -20px -8px 0 -11px; }
    .kind { margin-top: 8px; font-size: 36.8px; line-height: 43px; }
    .call { width: 53px; height: 53px; fill: #fff; }
    .more { width: 12px; height: 46px; margin-left: 87px; fill: #fff; }
    .actions { display: flex; align-items: center; height: 131px; background: rgba(12, 12, 12, 0.5); color: #fff; font-size: 40.3px; font-weight: 700; line-height: 47px; }
    .action { flex: 1; padding-top: 3px; text-align: center; }
    .rule { width: 3px; height: 89px; margin: 4px 0 0 -2px; background: #fff; }
    .feed { flex: 1; display: flex; flex-direction: column; padding: 23px 45px 0; }
    .day { align-self: center; box-sizing: border-box; height: 82px; padding: 18.500px 25px 0; border-radius: 22px; background: #1d282f; color: #8696a0; font-size: 39.5px; font-weight: 500; line-height: 48px; }
    .notice { align-self: center; box-sizing: border-box; width: 956px; height: 224px; margin: 30px 0 0; padding-top: 19px; border-radius: 22px; background: #1c262c; color: #ffd279; font-size: 40.1px; line-height: 47px; text-align: center; }
    .line { display: block; }
    .lock { width: 24px; height: 32px; margin: 0 15px -2px 9px; }
    .turn { margin-top: 28px; }
    .next { margin-top: 6px; }
    .pad { display: block; height: 54px; }
    .name-cover { width: 239px; height: 64px; margin: -1px -2px -6px -3px; vertical-align: top; --lip: 6px; }
    .composer { display: flex; align-items: center; gap: 13px; height: 132px; padding: 0 12px 12px 13px; }
    .field { flex: 1; display: flex; align-items: center; height: 129px; box-sizing: border-box; padding: 0 40px 0 31px; border-radius: 65px; background: #1f2c34; color: #8696a0; }
    .smile { width: 59px; height: 57px; }
    .caret { width: 6px; height: 76px; margin: 0 -5px 0 32px; background: #14a085; }
    .hint { position: relative; flex: 1; padding-top: 3px; font-size: 55.5px; line-height: 64px; }
    .clip { width: 61px; height: 55px; }
    .cam { width: 57px; height: 53px; margin-left: 65px; }
    .mic { display: flex; align-items: center; justify-content: center; width: 132px; height: 132px; border-radius: 50%; background: #00a884; }
    .mic-glyph { width: 44px; height: 60px; }
  `;

  render() {
    return html`<main class="screen">
      <chat-wallpaper></chat-wallpaper>
      <header class="top">
        <svg class="back" viewBox="0 0 48 48"><path d="M25 3L5 24L25 45M5 24H47" /></svg>
        <svg class="avatar" viewBox="0 0 98 98">
          <defs>
            <linearGradient id="leaf" x1="0" y1="0" x2="0" y2="1">
              <stop offset="0" stop-color="#2a4f29" /><stop offset=".45" stop-color="#355a34" />
              <stop offset=".6" stop-color="#3a5c30" /><stop offset=".68" stop-color="#294e25" /><stop offset="1" stop-color="#274623" />
            </linearGradient>
            <clipPath id="round"><circle cx="49" cy="49" r="49" /></clipPath>
          </defs>
          <g clip-path="url(#round)">
            <rect width="98" height="98" fill="url(#leaf)" />
            <path d="M14 12C36 34 66 18 84 26L70 0H20Z" fill="#244a22" opacity=".7" />
            <path d="M0 54L44 38L82 64L98 60V66H0Z" fill="#4a6a38" opacity=".4" />
            <path d="M78 84L98 62V78L86 90Z" fill="#57703c" opacity=".5" />
          </g>
          <g fill="none" stroke="#dfe8df" stroke-width="2.2">
            <rect x="27" y="27" width="44" height="44" rx="12" /><circle cx="49" cy="49" r="10.8" />
          </g>
          <circle cx="61" cy="36.500" r="2.300" fill="#dfe8df" />
        </svg>
        <div class="who">
          <div class="number"><span>+6</span><cover-block class="number-cover"></cover-block><span>4</span></div>
          <div class="kind">Akun bisnis</div>
        </div>
        <svg class="call" viewBox="698 158 160 160">
          <path d="M714 160H736C746 160 750 166 750 174L751 200C751 206 748 210 742 215L732 224C744 250 762 268 786 282L800 268C805 263 810 262 816 262L838 263C848 264 855 268 855 278V298C855 310 848 315 836 315C765 312 702 250 700 178C700 167 705 161 714 160Z" />
          <path d="M820 167V222M793 194H847" stroke="#fff" stroke-width="15" stroke-linecap="round" />
        </svg>
        <svg class="more" viewBox="0 0 12 46"><circle cx="6" cy="6" r="6" /><circle cx="6" cy="23" r="6" /><circle cx="6" cy="40" r="6" /></svg>
      </header>

      <nav class="actions">
        <span class="action">Blokir</span><span class="rule"></span><span class="action">Tambah</span>
      </nav>

      <section class="feed">
        <div class="day">Hari ini</div>
        <div class="notice">
          <span class="line"><svg class="lock" viewBox="0 0 25 32"><rect y="12" width="25" height="20" rx="4" fill="#ffd279" /><path d="M5 14V9C5 -.5 20 -.5 20 9V14" fill="none" stroke="#d8bd84" stroke-width="3" /></svg>Pesan dan panggilan terenkripsi secara</span>
          <span class="line">end-to-end. Tidak seorang pun di luar chat ini,</span>
          <span class="line">termasuk WhatsApp, yang dapat membaca atau</span>
          <span class="line">mendengarkannya. Ketuk untuk info selengkapnya.</span>
        </div>
        <chat-bubble class="turn" tail time="15.30">Hello, good evening</chat-bubble>
        <chat-bubble class="turn" tail out time="15.32">Hello</chat-bubble>
        <chat-bubble class="turn" tail time="15.33">Yes please</chat-bubble>
        <chat-bubble class="next" block time="15.33">My name is Sarah from <cover-block class="name-cover"></cover-block>ng<br />Malaysia and Indonesia Clutch Ltd.<span class="pad"></span></chat-bubble>
        <chat-bubble class="next" block time="15.33">There is an offer for you from our<br />company, Can i share the job scope<br />and Salary?</chat-bubble>
        <chat-bubble class="next" time="15.33">kindly reply to that</chat-bubble>
        <chat-bubble class="turn" tail out time="15.34">Skip dulu gan</chat-bubble>
      </section>

      <footer class="composer">
        <div class="field">
          <svg class="smile" viewBox="133 160 176 172">
            <circle cx="221" cy="246" r="86" fill="#8696a0" />
            <g fill="#1f2c34"><ellipse cx="193" cy="223" rx="13.500" ry="18" /><ellipse cx="247" cy="223" rx="13.500" ry="18" /><path d="M163 255H275C273 285 246 305 219 305C190 305 165 285 163 255Z" /></g>
            <path d="M174 265H264C262 275 240 284 219 284C195 284 176 276 174 265Z" fill="#8696a0" />
          </svg>
          <span class="caret"></span>
          <span class="hint">Ketik pesan</span>
          <svg class="clip" viewBox="60 162 184 166"><path d="M158 183L222 246C238 262 238 290 222 306C204 324 178 322 162 306L80 222C66 208 66 190 78 179C90 168 106 171 118 183L188 252C200 268 182 282 170 272L118 221" fill="none" stroke="#8696a0" stroke-width="11" stroke-linecap="round" stroke-linejoin="round" /></svg>
          <svg class="cam" viewBox="438 162 172 160">
            <path d="M462 187H474C487 186 490 165 504 164H546C560 165 563 186 576 186H588C602 188 608 198 608 208V298C608 312 600 321 586 321H462C448 321 440 312 440 298V208C440 196 448 188 462 187Z" fill="#8696a0" />
            <circle cx="524" cy="247" r="41" fill="#1f2c34" /><circle cx="524" cy="247" r="28" fill="#8696a0" />
          </svg>
        </div>
        <div class="mic">
          <svg class="mic-glyph" viewBox="900 155 132 180">
            <rect x="940" y="158" width="52" height="106" rx="26" fill="#fff" />
            <path d="M911 240C911 275 935 292 966 292S1021 275 1021 240M966 292V327" fill="none" stroke="#fff" stroke-width="15" stroke-linecap="round" />
          </svg>
        </div>
      </footer>
    </main>`;
  }
}
